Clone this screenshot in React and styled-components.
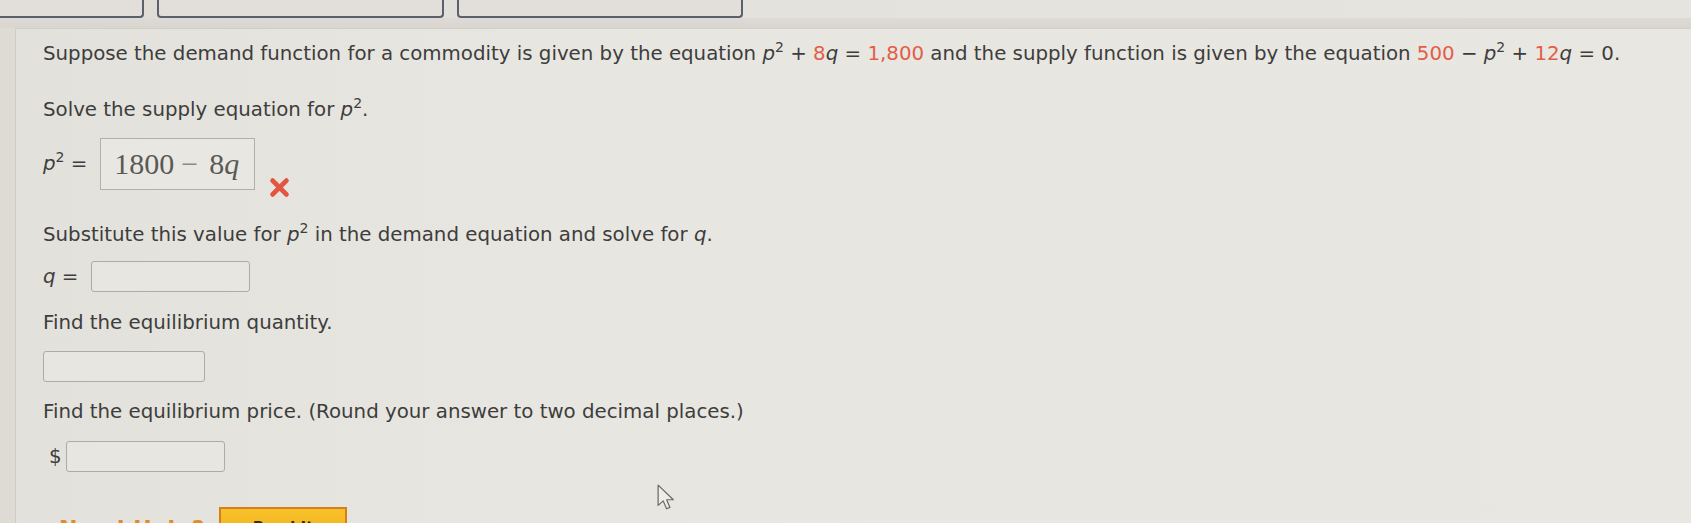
import React from "react";
import styled, { createGlobalStyle } from "styled-components";

const GlobalStyle = createGlobalStyle`
  html, body {
    margin: 0;
    padding: 0;
    background: #dddad4;
  }
  body {
    font-family: "DejaVu Sans", Verdana, sans-serif;
    overflow: hidden;
  }
`;

function App() {
  return (
    <Page>
      <GlobalStyle />
      <TabRow>
        <Tab width={144} />
        <Tab width={287} />
        <Tab width={286} />
      </TabRow>
      <Strip />
      <Panel>
        <Line top={13}>
          Suppose the demand function for a commodity is given by the equation{" "}
          <V>p</V>
          <Sup>2</Sup> + <Red>8</Red>
          <V>q</V> = <Red>1,800</Red> and the supply function is given by the
          equation <Red>500</Red> − <V>p</V>
          <Sup>2</Sup> + <Red>12</Red>
          <V>q</V> = 0.
        </Line>
        <Line top={32}>
          Solve the supply equation for <V>p</V>
          <Sup>2</Sup>.
        </Line>
        <AnswerRow top={16}>
          <Label>
            <V>p</V>
            <Sup>2</Sup> =
          </Label>
          <FilledBox>
            1800<Minus>−</Minus>8<MathI>q</MathI>
          </FilledBox>
          <WrongMark viewBox="0 0 20 20">
            <path
              d="M4 4 L16 16 M16 4 L4 16"
              stroke="#e2553f"
              strokeWidth="4.2"
              strokeLinecap="round"
            />
          </WrongMark>
        </AnswerRow>
        <Line top={33}>
          Substitute this value for <V>p</V>
          <Sup>2</Sup> in the demand equation and solve for <V>q</V>.
        </Line>
        <AnswerRow top={14}>
          <Label>
            <V>q</V> =
          </Label>
          <EmptyBox width={159} />
        </AnswerRow>
        <Line top={19}>Find the equilibrium quantity.</Line>
        <AnswerRow top={16}>
          <EmptyBox width={162} />
        </AnswerRow>
        <Line top={18}>
          Find the equilibrium price. (Round your answer to two decimal places.)
        </Line>
        <AnswerRow top={17}>
          <Label small>$</Label>
          <EmptyBox width={159} />
        </AnswerRow>
        <HelpRow>
          <HelpText>Need Help?</HelpText>
          <ReadButton>Read It</ReadButton>
        </HelpRow>
      </Panel>
      <Cursor viewBox="0 0 16 24">
        <path
          d="M1 1 L1 19 L5.5 15 L8.5 22 L11.5 20.8 L8.6 14 L14.5 14 Z"
          fill="#efede8"
          stroke="#6c6a62"
          strokeWidth="1.1"
          strokeLinejoin="round"
        />
      </Cursor>
    </Page>
  );
}

export default App;

const Page = styled.div`
  position: relative;
  width: 1691px;
  height: 523px;
  overflow: hidden;
  background: linear-gradient(90deg, #dedbd5 0%, #e4e2dd 40%, #e6e4df 100%);
`;

const TabRow = styled.div`
  display: flex;
  gap: 13px;
  height: 18px;
`;

const Tab = styled.div`
  width: ${(p) => p.width}px;
  height: 18px;
  box-sizing: border-box;
  border: 2px solid #5b606b;
  border-top: none;
  border-radius: 0 0 4px 4px;
  background: #e2dfda;
  &:first-child {
    border-left: none;
    border-radius: 0 0 4px 0;
  }
`;

const Strip = styled.div`
  height: 10px;
  background: linear-gradient(180deg, #dedbd6, #d9d6d0);
`;

const Panel = styled.div`
  margin-left: 15px;
  height: 495px;
  border-left: 1px solid #cfccc6;
  border-top: 1px solid #d2cfc9;
  background: linear-gradient(90deg, #e3e1dc 0%, #e8e6e1 30%, #e9e7e2 100%);
  padding-left: 27px;
  color: #3d3d3c;
  font-size: 19.8px;
  display: flex;
  flex-direction: column;
  align-items: flex-start;
`;

const Line = styled.div`
  margin-top: ${(p) => p.top}px;
  line-height: 24px;
  white-space: nowrap;
`;

const V = styled.i`
  font-style: italic;
`;

const Sup = styled.sup`
  font-size: 14px;
  vertical-align: 8px;
  line-height: 0;
`;

const Red = styled.span`
  color: #e25e48;
`;

const AnswerRow = styled.div`
  margin-top: ${(p) => p.top}px;
  display: flex;
  align-items: center;
`;

const Label = styled.span`
  width: ${(p) => (p.small ? "17px" : "auto")};
  padding-right: ${(p) => (p.small ? "0" : "13px")};
  padding-left: ${(p) => (p.small ? "6px" : "0")};
  white-space: nowrap;
  line-height: 24px;
`;

const FilledBox = styled.div`
  width: 155px;
  height: 52px;
  box-sizing: border-box;
  border: 1px solid #b3b0aa;
  background: #e9e7e2;
  display: flex;
  align-items: center;
  padding-left: 13px;
  font-family: "Liberation Serif", "Times New Roman", serif;
  font-size: 30px;
  color: #5a5955;
  white-space: pre;
`;

const Minus = styled.span`
  color: #8c8a85;
  margin: 0 11px 0 7px;
`;

const MathI = styled.i`
  font-style: italic;
`;

const WrongMark = styled.svg`
  width: 23px;
  height: 23px;
  margin-left: 13px;
  align-self: flex-end;
  margin-bottom: -9px;
`;

const EmptyBox = styled.div`
  width: ${(p) => p.width}px;
  height: 31px;
  box-sizing: border-box;
  border: 1px solid #aeaba5;
  border-radius: 3px;
  background: #e8e6e1;
`;

const HelpRow = styled.div`
  margin-top: 35px;
  display: flex;
  align-items: flex-start;
  gap: 14px;
  padding-left: 16px;
`;

const HelpText = styled.span`
  color: #e28a2c;
  font-size: 22px;
  font-weight: bold;
  margin-top: 9px;
  letter-spacing: 0.5px;
`;

const ReadButton = styled.div`
  width: 128px;
  height: 40px;
  box-sizing: border-box;
  border: 2px solid #d77d1a;
  background: linear-gradient(180deg, #f7c12d, #f2ae12);
  font-size: 15px;
  font-weight: bold;
  color: #3d2a08;
  text-align: center;
  padding-top: 10px;
`;

const Cursor = styled.svg`
  position: absolute;
  left: 657px;
  top: 484px;
  width: 18px;
  height: 27px;
`;
